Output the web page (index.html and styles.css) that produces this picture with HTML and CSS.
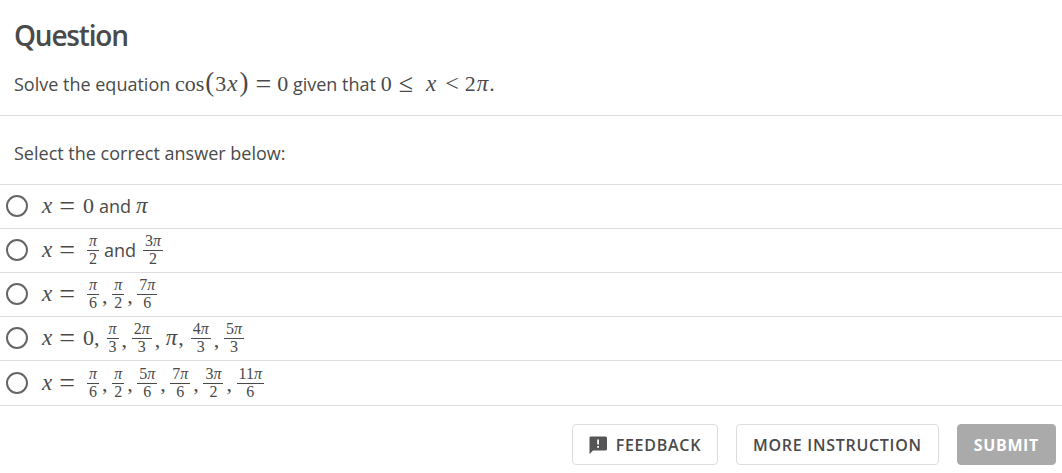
FILE: index.html
```html
<!DOCTYPE html>
<html lang="en">
<head>
    <meta charset="UTF-8">
    <title>Question</title>
    <link rel="stylesheet" href="styles.css">
</head>
<body>

    <div class="question">
        <h1>Question</h1>
        <p>Solve the equation <span class="math">cos<span class="paren">(</span>3<i>x</i><span class="paren">)</span><span class="op">=</span>0</span> given that <span class="math">0<span class="rel-le">≤</span><i>x</i><span class="rel-lt">&lt;</span>2<i>π</i>.</span></p>
    </div>

    <div class="prompt">Select the correct answer below:</div>

    <div class="answers">
        <label class="answer">
            <span class="radio"></span>
            <span class="math"><i>x</i><span class="op">=</span>0</span>
            <span class="word">and</span>
            <span class="math"><i>π</i></span>
        </label>
        <label class="answer">
            <span class="radio"></span>
            <span class="math"><i>x</i><span class="op">=</span></span>
            <span class="frac"><span><i>π</i></span><span>2</span></span>
            <span class="word">and</span>
            <span class="frac"><span>3<i>π</i></span><span>2</span></span>
        </label>
        <label class="answer">
            <span class="radio"></span>
            <span class="math"><i>x</i><span class="op">=</span></span>
            <span class="frac"><span><i>π</i></span><span>6</span></span><span class="comma">,</span>
            <span class="frac"><span><i>π</i></span><span>2</span></span><span class="comma">,</span>
            <span class="frac"><span>7<i>π</i></span><span>6</span></span>
        </label>
        <label class="answer">
            <span class="radio"></span>
            <span class="math"><i>x</i><span class="op">=</span>0<span class="sep">,</span></span>
            <span class="frac"><span><i>π</i></span><span>3</span></span><span class="comma">,</span>
            <span class="frac"><span>2<i>π</i></span><span>3</span></span><span class="comma">,</span>
            <span class="math"><i>π</i><span class="sep">,</span></span>
            <span class="frac"><span>4<i>π</i></span><span>3</span></span><span class="comma">,</span>
            <span class="frac"><span>5<i>π</i></span><span>3</span></span>
        </label>
        <label class="answer">
            <span class="radio"></span>
            <span class="math"><i>x</i><span class="op">=</span></span>
            <span class="frac"><span><i>π</i></span><span>6</span></span><span class="comma">,</span>
            <span class="frac"><span><i>π</i></span><span>2</span></span><span class="comma">,</span>
            <span class="frac"><span>5<i>π</i></span><span>6</span></span><span class="comma">,</span>
            <span class="frac"><span>7<i>π</i></span><span>6</span></span><span class="comma">,</span>
            <span class="frac"><span>3<i>π</i></span><span>2</span></span><span class="comma">,</span>
            <span class="frac"><span>11<i>π</i></span><span>6</span></span>
        </label>
    </div>

    <div class="actions">
        <button class="btn">
            <svg class="btn-icon" viewBox="0 0 18 18" width="18" height="18"><path d="M1.5 0.5h15a1.5 1.5 0 0 1 1.5 1.5v11a1.5 1.5 0 0 1-1.5 1.5H4l-3.5 3.5V2a1.5 1.5 0 0 1 1-1.5z" fill="#555"/><rect x="8.2" y="3.5" width="1.8" height="5" fill="#fff"/><rect x="8.2" y="10" width="1.8" height="1.8" fill="#fff"/></svg>
            FEEDBACK
        </button>
        <button class="btn">MORE INSTRUCTION</button>
        <button class="btn btn-submit">SUBMIT</button>
    </div>

</body>
</html>
```

FILE: styles.css
```css
/* General Styles */
body {
    margin: 0;
    font-family: 'Open Sans', sans-serif;
    font-size: 18px;
    color: #4a4a4a;
    background: white;
}

/* Question */
.question {
    height: 116px;
    padding: 17px 14px 0;
    box-sizing: border-box;
    border-bottom: 1px solid #ddd;
}

.question h1 {
    margin: 0;
    font-size: 28px;
    font-weight: 600;
    line-height: 36px;
    letter-spacing: -1.2px;
}

.question p {
    margin: 17px 0 0;
    line-height: 28px;
}

.question .op {
    margin: 0 6px;
}

.prompt {
    height: 69px;
    box-sizing: border-box;
    padding: 24px 14px 0;
    line-height: 26px;
    border-bottom: 1px solid #ddd;
}

/* Math */
.math {
    font-family: 'Liberation Serif', serif;
    font-size: 22px;
    white-space: pre;
}

.math i {
    font-size: 23px;
    padding: 0 1px;
}

.paren {
    font-size: 27px;
    line-height: 20px;
    padding: 0 1px;
}

.op {
    font-size: 28px;
    line-height: 20px;
    vertical-align: -2px;
    margin: 0 8px 0 6px;
}

.rel-le {
    font-size: 26px;
    line-height: 20px;
    vertical-align: -1px;
    margin: 0 12px 0 7px;
}

.rel-lt {
    font-size: 24px;
    line-height: 20px;
    margin: 0 6px 0 8px;
}

.sep {
    margin-right: 3px;
}

.frac {
    display: inline-flex;
    flex-direction: column;
    align-items: center;
    font-family: 'Liberation Serif', serif;
    font-size: 16px;
    line-height: 16px;
}

.frac span:first-child {
    border-bottom: 1px solid #4a4a4a;
    padding: 0 2px 1px;
    align-self: stretch;
    text-align: center;
}

.comma {
    font-family: 'Liberation Serif', serif;
    font-size: 22px;
    margin: 3px 4.6px 0 3px;
}

/* Answers */
.answer {
    display: flex;
    align-items: center;
    height: 44px;
    box-sizing: border-box;
    padding-bottom: 1px;
    border-bottom: 1px solid #ddd;
}

.answer:last-child {
    height: 45px;
}

.answer .math {
    margin-right: 2px;
}

.answer .math + .frac {
    margin-left: 2px;
}

.radio {
    width: 22px;
    height: 22px;
    box-sizing: border-box;
    border: 2.5px solid #666;
    border-radius: 50%;
    margin: 0 13px 0 6px;
}

.word {
    margin: 0 7px 0 5px;
}

.math + .word {
    margin: 0 4px 0 3px;
}

/* Buttons */
.actions {
    display: flex;
    justify-content: flex-end;
    gap: 18px;
    padding: 18px 6px 0 0;
}

.btn {
    display: flex;
    align-items: center;
    gap: 9px;
    height: 41px;
    padding: 0 16px;
    background: white;
    border: 1px solid #ddd;
    border-radius: 4px;
    color: #4a4a4a;
    font-family: 'Open Sans', sans-serif;
    font-size: 16px;
    font-weight: 600;
    letter-spacing: 0.72px;
}

.btn-submit {
    background: #aaa;
    border-color: #aaa;
    color: white;
    font-weight: 700;
    letter-spacing: 0.65px;
}
```
